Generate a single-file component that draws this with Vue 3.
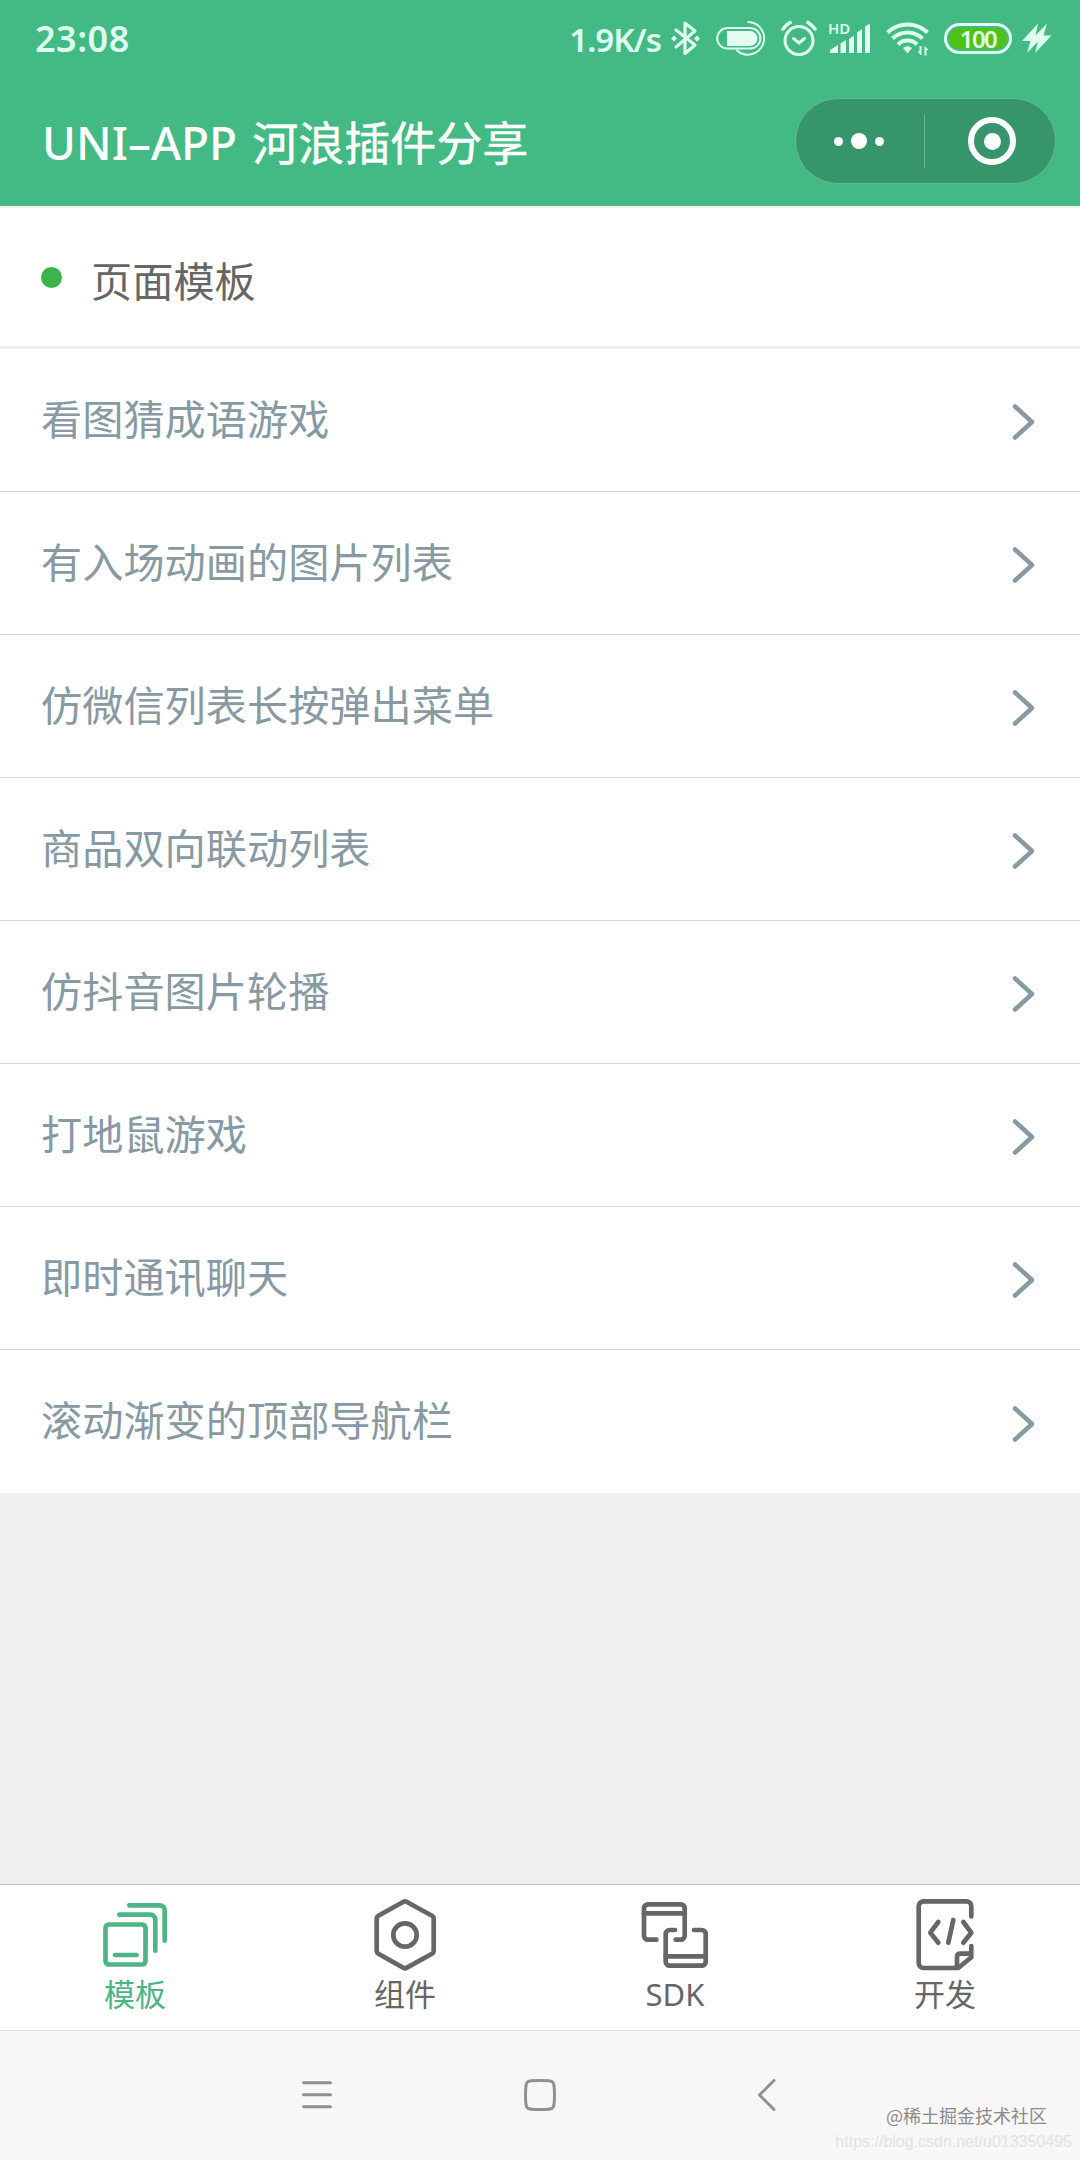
<template>
  <div class="page">
    <header class="header">
      <div class="status">
        <span class="status__time">23:08</span>
        <div class="status__icons">
          <span class="status__speed">1.9K/s</span>
          <svg class="icon-bluetooth" width="30" height="36" viewBox="0 0 30 36">
            <path d="M5 10 24 25 14 33.500V3l10 8L5 27" fill="none" stroke="#defff0" stroke-width="3.200" stroke-linejoin="round" stroke-linecap="round" />
            <path d="M0 18.500l3-3 3 3-3 3zM23 18.500l3-3 3 3-3 3z" fill="#defff0" />
          </svg>
          <svg class="icon-case" width="50" height="36" viewBox="0 0 50 36">
            <g fill="none" stroke="#defff0" stroke-width="2">
              <path d="M34 8H11.500a10.300 10.300 0 0 0 0 20.600H34a10.300 10.300 0 0 0 0-20.600z" />
              <path d="M31.500 2a16.300 16.300 0 1 1-11 28" />
            </g>
            <path d="M11 11h23a7.500 7.500 0 0 1 0 15H11z" fill="#e4fbf1" />
          </svg>
          <svg class="icon-alarm" width="36" height="36" viewBox="0 0 36 36">
            <g fill="none" stroke="#defff0" stroke-width="3" stroke-linecap="round">
              <circle cx="18" cy="20.500" r="14" />
              <path d="M12.500 18.500l5.500 4.500 5.500-4.500" />
              <path d="M2 9q3-4 7-6.500M34 9q-3-4-7-6.500" stroke-width="3.600" />
            </g>
          </svg>
          <div class="signal">
            <span class="signal__hd">HD</span>
            <svg class="signal__bars" width="42" height="32" viewBox="0 0 42 32">
              <path d="M1 31v-3l8-5v8zM11.500 31V21.500l5.500-3.500v13zM20 31V17l5-3.500V31zM28 31V10.500L33 7v24zM36 31V4.500L41 1.500V31z" fill="#e4fbf1" />
            </svg>
          </div>
          <svg class="icon-wifi" width="44" height="36" viewBox="0 0 44 36">
            <g fill="none" stroke="#defff0" stroke-width="4">
              <path d="M1.500 12.500a29 29 0 0 1 40 0" />
              <path d="M6.500 18.500a21.500 21.500 0 0 1 30 0" />
              <path d="M12 24.500a13.500 13.500 0 0 1 19 0" />
            </g>
            <path d="M17 28q4.500-3.500 9 0l-4.500 5.500z" fill="#defff0" />
            <path d="M34.500 35l-3-4h2v-5h2v9zM38.500 26l4 4h-2v5.500h-2z" fill="#defff0" />
          </svg>
          <div class="battery"><span class="battery__level">100</span></div>
          <svg class="icon-bolt" width="30" height="32" viewBox="0 0 30 32">
            <path d="M16 1.500 0 19h8.500L5 31 16 19.500 13 31 29.500 13.500h-8L25 1.500 13.500 13.500z" fill="#defff0" />
          </svg>
        </div>
      </div>
      <div class="navbar">
        <h1 class="navbar__title">UNI–APP <span class="navbar__cjk">河浪插件分享</span></h1>
        <div class="capsule">
          <div class="capsule__half capsule__half--menu">
            <i class="dot" /><i class="dot dot--big" /><i class="dot" />
          </div>
          <div class="capsule__line" />
          <div class="capsule__half capsule__half--close">
            <i class="target" />
          </div>
        </div>
      </div>
    </header>

    <div class="section">
      <i class="section__dot" />
      <span class="section__title">页面模板</span>
    </div>

    <ul class="list">
      <li v-for="item in items" :key="item" class="list__item">
        <span class="list__text">{{ item }}</span>
        <svg class="list__arrow" width="24" height="38" viewBox="0 0 24 38">
          <path d="M3 3.500 20 19 3 34.500" />
        </svg>
      </li>
    </ul>

    <main class="blank" />

    <nav class="tabbar">
      <div
        v-for="tab in tabs"
        :key="tab.name"
        class="tabbar__item"
        :class="{ 'tabbar__item--active': tab.name === current }"
        @click="current = tab.name"
      >
        <svg class="tabbar__icon" width="72" height="72" viewBox="0 0 72 72">
          <path v-for="d in tab.paths" :key="d" :d="d" />
        </svg>
        <span class="tabbar__label">{{ tab.name }}</span>
      </div>
    </nav>

    <footer class="system">
      <svg class="system__menu" width="34" height="34" viewBox="0 0 34 34">
        <path d="M3.500 4.700h27M3.500 16.700h27M3.500 28.700h27" />
      </svg>
      <svg class="system__home" width="34" height="34" viewBox="0 0 34 34">
        <path d="M17 2.500c10 0 12 .5 13 2s1.500 4 1.500 12.500-.5 11-1.500 12.500-3 2-13 2-12-.5-13-2S2.500 25.500 2.500 17 3 6 4 4.500s3-2 13-2z" />
      </svg>
      <svg class="system__back" width="22" height="34" viewBox="0 0 22 34">
        <path d="M18 2.500 3.500 17 18 31.500" />
      </svg>
      <div class="watermark">
        <p class="watermark__name">@稀土掘金技术社区</p>
        <p class="watermark__url">https://blog.csdn.net/u013350495</p>
      </div>
    </footer>
  </div>
</template>

<script setup>
import { ref } from "vue";

const current = ref("模板");

const items = [
  "看图猜成语游戏",
  "有入场动画的图片列表",
  "仿微信列表长按弹出菜单",
  "商品双向联动列表",
  "仿抖音图片轮播",
  "打地鼠游戏",
  "即时通讯聊天",
  "滚动渐变的顶部导航栏",
];

const tabs = [
  {
    name: "模板",
    paths: [
      "M10 25.500h33a3.500 3.500 0 0 1 3.500 3.500v33a3.500 3.500 0 0 1-3.500 3.500H10A3.500 3.500 0 0 1 6.500 62V29a3.500 3.500 0 0 1 3.500-3.500z",
      "M16 56h21.500",
      "M20.300 15.700h31a5 5 0 0 1 5 5v31",
      "M30.300 6.300h30.400a5 5 0 0 1 5 5v30.400",
    ],
  },
  {
    name: "组件",
    paths: [
      "M34.500 2.800q1.500-.8 3 0L63 16.700q1.700 1 1.700 2.800v32.500q0 1.800-1.700 2.800L37.500 68.900q-1.500.8-3 0L9.400 54.800q-1.700-1-1.700-2.800V19.500q0-1.800 1.700-2.800z",
      "M36 24.300a11.700 11.700 0 1 1 0 23.400a11.700 11.700 0 1 1 0-23.400z",
    ],
  },
  {
    name: "SDK",
    paths: [
      "M17.400 40.700H9a4 4 0 0 1-4-4V9.300a4 4 0 0 1 4-4h32.700a4 4 0 0 1 4 4v27.400a4 4 0 0 1-4 4h-5",
      "M5 14.300h40.700",
      "M36 31h-5.300a4 4 0 0 0-4 4v27.700a4 4 0 0 0 4 4h32a4 4 0 0 0 4-4V35a4 4 0 0 0-4-4H55",
      "M26.700 57.300h40",
    ],
  },
  {
    name: "开发",
    paths: [
      "M62.300 17.500V7.300a5 5 0 0 0-5-5H14.700a5 5 0 0 0-5 5V64a5 5 0 0 0 5 5h34.600l13-10.700V47",
      "M48 68V58q0-3.300 3.300-3.300H61",
      "M29.300 23l-8 10.700 8 10",
      "M44.300 21l-5 22.700",
      "M54.300 23l8 10.700-8 10",
    ],
  },
];
</script>

<style>
body {
  margin: 0;
}
</style>

<style scoped>
.page {
  display: flex;
  flex-direction: column;
  width: 1080px;
  height: 2160px;
  overflow: hidden;
  background: #f0f0f0;
  font-family: "Noto Sans CJK SC", sans-serif;
}

.header {
  height: 206px;
  flex: none;
  background: #43b983;
  color: #fff;
}

.status {
  display: flex;
  align-items: center;
  justify-content: space-between;
  height: 76px;
  padding: 0 28px 0 35px;
  color: #defff0;
  font-family: "Noto Sans", sans-serif;
  font-weight: 600;
}

.status__time {
  font-size: 36px;
  letter-spacing: 0.5px;
}

.status__icons {
  display: flex;
  align-items: center;
}

.status__speed {
  margin-top: 2px;
  font-size: 33px;
  letter-spacing: -1px;
}

.icon-bluetooth {
  margin-left: 10px;
}

.icon-case {
  margin-left: 15px;
}

.icon-alarm {
  margin-left: 15px;
}

.signal {
  position: relative;
  height: 32px;
  margin-left: 12px;
}

.signal__hd {
  position: absolute;
  top: -2px;
  left: -1px;
  font-size: 15px;
  line-height: 16px;
}

.signal__bars {
  display: block;
}

.icon-wifi {
  margin-left: 15px;
}

.battery {
  display: flex;
  box-sizing: border-box;
  width: 68px;
  height: 31px;
  margin-left: 14px;
  padding: 2px;
  border: 3px solid #defff0;
  border-radius: 16px;
}

.battery__level {
  flex: 1;
  border-radius: 11px;
  background: #4fc314;
  font-size: 24px;
  font-weight: 600;
  line-height: 21px;
  letter-spacing: -1.5px;
  text-align: center;
}

.icon-bolt {
  margin-left: 10px;
}

.navbar {
  display: flex;
  align-items: center;
  justify-content: space-between;
  height: 130px;
  padding: 0 24px 0 42px;
}

.navbar__title {
  margin: 2px 0 0;
  font-family: "Noto Sans", "Noto Sans CJK SC", sans-serif;
  font-size: 46px;
  font-weight: 500;
  line-height: 60px;
  white-space: nowrap;
}

.navbar__cjk {
  margin-left: 3px;
  font-weight: 400;
  -webkit-text-stroke: 0.5px #fff;
}

.capsule {
  display: flex;
  align-items: center;
  box-sizing: border-box;
  width: 261px;
  height: 86px;
  border: 1px solid #66b890;
  border-radius: 43px;
  background: #37956b;
}

.capsule__half {
  display: flex;
  flex: 1;
  align-items: center;
  justify-content: center;
  gap: 8px;
}

.capsule__half--menu {
  padding-right: 2px;
}

.capsule__half--close {
  padding-left: 5px;
}

.capsule__line {
  width: 1px;
  height: 53px;
  background: #69b08f;
}

.dot {
  width: 9px;
  height: 9px;
  border-radius: 50%;
  background: #fff;
}

.dot--big {
  width: 16px;
  height: 16px;
}

.target {
  display: flex;
  align-items: center;
  justify-content: center;
  box-sizing: border-box;
  width: 48px;
  height: 48px;
  border: 6px solid #fff;
  border-radius: 50%;
}

.target::after {
  width: 17px;
  height: 17px;
  border-radius: 50%;
  background: #fff;
  content: "";
}

.section {
  display: flex;
  flex: none;
  align-items: center;
  box-sizing: border-box;
  height: 143px;
  padding-left: 41px;
  border-top: 2px solid #eef3f0;
  border-bottom: 3px solid #ededed;
  background: #fff;
}

.section__dot {
  width: 21px;
  height: 21px;
  margin-top: 1px;
  border-radius: 50%;
  background: #39b54a;
}

.section__title {
  margin: 4px 0 0 29px;
  color: #666;
  font-size: 41.2px;
  line-height: 60px;
}

.list {
  flex: none;
  margin: 0;
  padding: 0;
  background: #fff;
  list-style: none;
}

.list__item {
  display: flex;
  align-items: center;
  justify-content: space-between;
  box-sizing: border-box;
  height: 143px;
  padding: 0 44px 0 41px;
  border-bottom: 1px solid #d4d4d4;
  color: #8799a3;
  font-size: 41.2px;
  line-height: 60px;
}

.list__item:last-child {
  border-bottom: 0;
}

.list__text {
  margin-bottom: 7px;
}

.list__arrow {
  margin-top: 4px;
  fill: none;
  stroke: #8799a3;
  stroke-width: 4.5;
  stroke-linecap: round;
  stroke-linejoin: round;
}

.blank {
  flex: 1;
}

.tabbar {
  display: flex;
  flex: none;
  box-sizing: border-box;
  height: 146px;
  border-top: 1px solid #c8c8c8;
  background: #fff;
}

.tabbar__item {
  display: flex;
  flex: 1;
  flex-direction: column;
  align-items: center;
  padding-top: 14px;
  color: #666;
}

.tabbar__item--active {
  color: #4cb485;
}

.tabbar__icon {
  fill: none;
  stroke: currentColor;
  stroke-width: 4.7;
  stroke-linecap: round;
  stroke-linejoin: round;
}

.tabbar__label {
  margin-top: 3px;
  font-family: "Noto Sans", "Noto Sans CJK SC", sans-serif;
  font-size: 31px;
  line-height: 40px;
}

.system {
  position: relative;
  display: flex;
  flex: none;
  justify-content: space-between;
  box-sizing: border-box;
  height: 130px;
  padding: 47px 302px 0 300px;
  border-top: 1px solid #ddd;
  background: #f7f7f7;
}

.system svg {
  fill: none;
  stroke: #909090;
  stroke-width: 3;
  stroke-linecap: round;
  stroke-linejoin: round;
}

.system .system__home {
  margin-right: 10px;
}

.watermark {
  position: absolute;
  right: 8px;
  bottom: 6px;
}

.watermark p {
  margin: 0;
  text-align: right;
  white-space: nowrap;
}

.watermark .watermark__name {
  margin: 0 25px 3px 0;
  color: #8a8a8a;
  font-size: 18px;
  line-height: 24px;
}

.watermark__url {
  color: #e2e2e2;
  font-family: "Liberation Sans", Arial, sans-serif;
  font-size: 16px;
  line-height: 24px;
}
</style>
